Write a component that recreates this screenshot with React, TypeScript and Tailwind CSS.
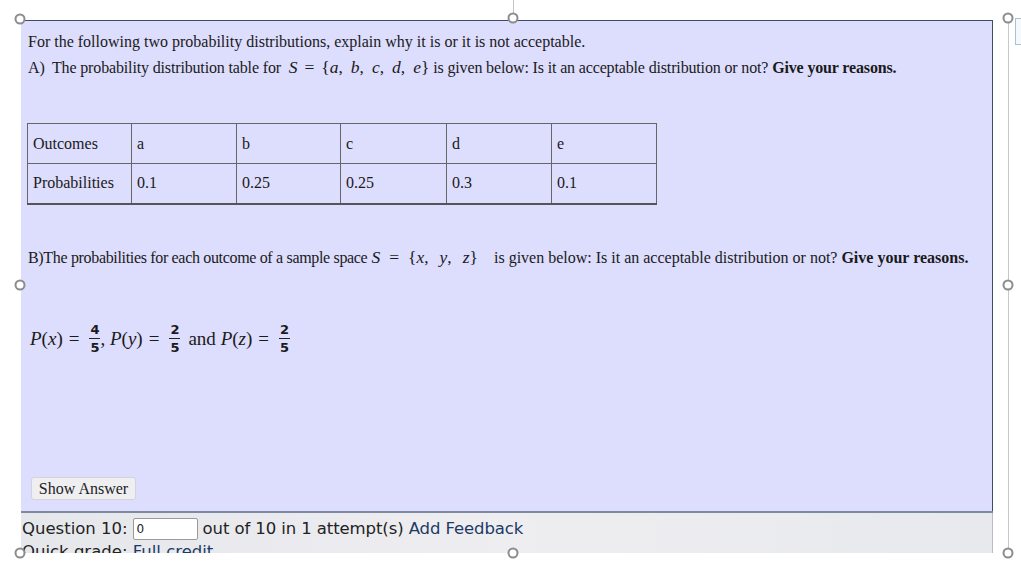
import React from "react";

const serif = "font-['Liberation_Serif',Times,serif]";

function Handle({ x, y }: { x: number; y: number }) {
  return (
    <div
      className="absolute w-[11px] h-[11px] -translate-x-1/2 -translate-y-1/2 rounded-full border-2 border-[#8c8c8c] bg-white"
      style={{ left: x, top: y }}
    />
  );
}

function Frac({ n, d }: { n: string; d: string }) {
  return (
    <span className="inline-flex flex-col items-center mx-[4px] font-['DejaVu_Sans',sans-serif] text-[13px] leading-[15px] font-bold">
      <span className="px-[1px]">{n}</span>
      <span className="w-[11px] h-[1px] bg-[#222] my-[1px]" />
      <span className="px-[1px]">{d}</span>
    </span>
  );
}

const I = ({ children }: { children: React.ReactNode }) => <i className="italic">{children}</i>;
const Eq = ({ w = "mx-[6px]" }: { w?: string }) => <span className={`${w} not-italic`}>=</span>;

// set-builder braces like MathJax renders them
function SetOf({ items, gap = "mr-[8px]" }: { items: string[]; gap?: string }) {
  return (
    <span className="text-[17.5px] leading-none tracking-normal">
      {"{"}
      {items.map((it, i) => (
        <span key={it}>
          <I>{it}</I>
          {i < items.length - 1 && <span className={gap}>,</span>}
        </span>
      ))}
      {"}"}
    </span>
  );
}

export default function App() {
  const outcomes = ["a", "b", "c", "d", "e"];
  const probs = ["0.1", "0.25", "0.25", "0.3", "0.1"];
  const widths = ["w-[104px]", "w-[105px]", "w-[104px]", "w-[106px]", "w-[105px]", "w-[105px]"];

  return (
    <div className={`relative w-[1021px] h-[580px] overflow-hidden bg-white text-[#1a1a1a] ${serif}`}>
      <div className="pt-[20px] pl-[21px]">
        <div className="w-[972px]">
          {/* question body */}
          <div className="h-[491px] bg-[#ddddfd] border-t border-r border-[#3f4c66] px-[7px] pt-[8px] text-[16px] leading-[26px]">
            <p className="h-[26px]">For the following two probability distributions, explain why it is or it is not acceptable.</p>
            <p className="h-[26px] tracking-[-0.15px]">
              A)&nbsp; The probability distribution table for&nbsp;{" "}
              <span className="text-[17.5px] leading-none tracking-normal"><I>S</I><Eq w="mx-[7px]" /></span>
              <SetOf items={["a", "b", "c", "d", "e"]} /> is given below: Is it an acceptable distribution or not? <b>Give your reasons.</b>
            </p>

            <table className="mt-[42px] -ml-[1px] border-collapse border-b-2 border-[#555] text-[16px]">
              <tbody>
                <tr className="h-[40px]">
                  <td className={`${widths[0]} border border-[#666] pl-[5px]`}>Outcomes</td>
                  {outcomes.map((o, i) => (
                    <td key={o} className={`${widths[i + 1]} border border-[#666] pl-[5px]`}>{o}</td>
                  ))}
                </tr>
                <tr className="h-[40px]">
                  <td className="border border-[#666] pl-[5px]">Probabilities</td>
                  {probs.map((p, i) => (
                    <td key={i} className="border border-[#666] pl-[5px]">{p}</td>
                  ))}
                </tr>
              </tbody>
            </table>

            <p className="mt-[40px] h-[26px]">
              <span className="tracking-[-0.33px]">B)The probabilities for each outcome of a sample space</span>{" "}
              <span className="text-[17.5px] leading-none"><I>S</I><Eq w="mx-[9px]" /></span>
              <SetOf items={["x", "y", "z"]} gap="mr-[11px]" />&nbsp;&nbsp;&nbsp; is given below: Is it an acceptable distribution or not? <b>Give your reasons.</b>
            </p>

            <div className="mt-[48px] h-[40px] flex items-center pl-[2px] text-[19px]">
              <span><I>P</I>(<I>x</I>)<Eq /></span>
              <Frac n="4" d="5" />
              <span className="-ml-[4px]">, <I>P</I>(<I>y</I>)<Eq /></span>
              <Frac n="2" d="5" />
              <span className="ml-[4px]">and <I>P</I>(<I>z</I>)<Eq /></span>
              <Frac n="2" d="5" />
            </div>

            <button className="mt-[118px] ml-[3px] h-[23px] w-[105px] rounded-[3px] border border-[#d4d4d8] bg-[#efeff2] text-[16px] leading-[21px] text-[#222]">
              Show Answer
            </button>
          </div>

          <div className="h-[2px] bg-[#7e8aa0]" />

          {/* grading bar */}
          <div className="h-[40px] overflow-hidden bg-gradient-to-r from-[#e6e7eb] via-[#eeeef1] to-[#e8e9ec] border-r border-[#b8bcc6] pl-[1px] font-['DejaVu_Sans',Verdana,sans-serif] text-[16.5px] leading-[22px] text-[#222]">
            <div className="flex items-center h-[30px] pt-[2px]">
              <span>Question 10:</span>
              <span className="ml-[5px] w-[65px] h-[22px] border border-[#9a9a9a] rounded-[2px] bg-white pl-[3px] text-[12px] leading-[20px]">0</span>
              <span className="ml-[5px] tracking-[-0.1px]">out of 10 in 1 attempt(s) <span className="text-[#1d3a66]">Add Feedback</span></span>
            </div>
            <div className="leading-[18px]">
              Quick grade: <span className="text-[#1d3a66]">Full credit</span>
            </div>
          </div>
        </div>
      </div>

      {/* selection frame */}
      <div className="absolute left-[513px] top-0 w-[1px] h-[17px] bg-[#c4c4c4]" />
      <div className="absolute left-[1008px] top-[18px] w-[1px] h-[535px] bg-[#c8c8c8]" />
      <div className="absolute left-[1015px] top-[18px] w-[20px] h-[27px] border border-[#a9c1d9] bg-[#f6f9fc]" />
      <Handle x={20} y={19} />
      <Handle x={513} y={18} />
      <Handle x={1008} y={18} />
      <Handle x={20} y={285} />
      <Handle x={1008} y={285} />
      <Handle x={20} y={553} />
      <Handle x={513} y={553} />
      <Handle x={1008} y={553} />
    </div>
  );
}
